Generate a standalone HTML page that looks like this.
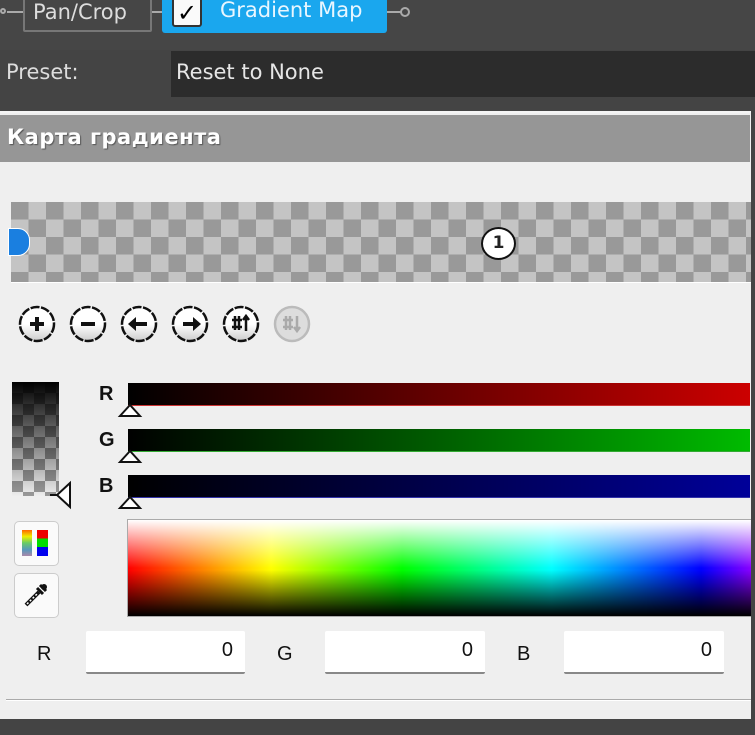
<!DOCTYPE html>
<html><head><meta charset="utf-8"><style>
*{margin:0;padding:0;box-sizing:border-box}
body{width:755px;height:735px;background:#444;position:relative;overflow:hidden;font-family:"DejaVu Sans","Liberation Sans",sans-serif}
.abs{position:absolute}
.lbl{font-size:20px;color:#111;font-family:"Liberation Sans",sans-serif}
.inp{position:absolute;background:#fff;height:43px;border-bottom:2px solid #888;border-radius:2px;font-size:20px;text-align:right;padding:8px 12px 0 0;color:#111;font-family:"Liberation Sans",sans-serif}
</style></head><body>
<div class="abs" style="left:0;top:0;width:755px;height:50px;background:#464646"></div>
<div class="abs" style="left:0;top:8px;width:6px;height:6px;border:2px solid #aaa;border-radius:50%;"></div>
<div class="abs" style="left:7px;top:11px;width:16px;height:2px;background:#aaa"></div>
<div class="abs" style="left:23px;top:-4px;width:129px;height:36px;border:2px solid #777;border-radius:2px;color:#ddd;font-size:21px;padding:2px 0 0 8px">Pan/Crop</div>
<div class="abs" style="left:152px;top:11px;width:10px;height:2px;background:#aaa"></div>
<div class="abs" style="left:162px;top:-4px;width:225px;height:37px;background:#1aa7ee;border-radius:3px;color:#e8f6ff;font-size:21px;padding:2px 0 0 58px">Gradient Map</div>
<div class="abs" style="left:172px;top:-3px;width:30px;height:30px;background:#fafafa;border:2px solid #333;border-radius:3px;font-size:24px;color:#000;text-align:center;line-height:28px">✓</div>
<div class="abs" style="left:387px;top:11px;width:14px;height:2px;background:#aaa"></div>
<div class="abs" style="left:400px;top:7px;width:10px;height:10px;border:2px solid #aaa;border-radius:50%"></div>
<div class="abs" style="left:6px;top:60px;font-size:21px;color:#ddd">Preset:</div>
<div class="abs" style="left:171px;top:51px;width:584px;height:46px;background:#2c2c2c;color:#e6e6e6;font-size:21px;padding:9px 0 0 5px">Reset to None</div>
<div class="abs" style="left:0;top:111px;width:751px;height:608px;background:#efefef;border-top:2px solid #f4f4f4"></div>
<div class="abs" style="left:0;top:115px;width:750px;height:47px;background:#969696;color:#fff;font-weight:bold;font-size:21px;letter-spacing:0.5px;padding:10px 0 0 7px;text-shadow:1px 1px 1px #555">Карта градиента</div>
<div class="abs" style="left:11px;top:202px;width:740px;height:81px;background:repeating-conic-gradient(#c4c4c4 0 25%,#999 0 50%) 0 0/35px 35px;border-bottom:1px solid #fff"></div>
<div class="abs" style="left:8px;top:228px;width:22px;height:28px;background:#1a7fe0;border-radius:0 12px 12px 0;border:1px solid #fff"></div>
<div class="abs" style="left:481px;top:227px;width:35px;height:33px;background:#fff;border:2px solid #111;border-radius:50%;text-align:center;font-size:17px;line-height:29px;color:#222;font-weight:bold">1</div>
<svg class="abs" style="left:0;top:300px" width="320" height="50">
<defs><linearGradient id="g" x1="0" y1="0" x2="0" y2="1"><stop offset="0.5" stop-color="#fff"/><stop offset="1" stop-color="#ccc"/></linearGradient></defs>
<g stroke="#111" stroke-width="2.5" fill="url(#g)" stroke-dasharray="9 1.5">
<circle cx="37" cy="24" r="17"/><circle cx="88" cy="24" r="17"/><circle cx="139" cy="24" r="17"/><circle cx="190" cy="24" r="17"/><circle cx="241" cy="24" r="17"/></g>
<circle cx="292" cy="24" r="17" stroke="#bbb" stroke-width="2.5" fill="#ddd"/>
<g stroke="#111" stroke-width="4" fill="none">
<path d="M30 24h14M37 17v14"/><path d="M81 24h14"/>
<path d="M132 24h15"/><path d="M183 24h15"/></g>
<path d="M128 24l8-7v14z" fill="#111"/><path d="M201 24l-8-7v14z" fill="#111"/>
<g stroke="#111" stroke-width="2.5" fill="none"><path d="M232 20h10M232 27h10M235 16v14M239 16v14M246 31v-14M243 20l3-4 3 4"/></g>
<g stroke="#aaa" stroke-width="2.5" fill="none"><path d="M283 20h10M283 27h10M286 16v14M290 16v14M297 16v14M294 27l3 4 3-4"/></g>
</svg>
<div class="abs" style="left:12px;top:382px;width:47px;height:114px;background:linear-gradient(#000,rgba(0,0,0,0)),repeating-conic-gradient(#999 0 25%,#eee 0 50%) 0 0/22px 22px"></div>
<svg class="abs" style="left:50px;top:480px" width="24" height="30"><path d="M20 3L7 15l13 12z" fill="#fff" stroke="#111" stroke-width="2"/><path d="M0 15h7" stroke="#111" stroke-width="2"/></svg>
<div class="abs lbl" style="left:99px;top:383px;font-weight:bold">R</div>
<div class="abs lbl" style="left:99px;top:429px;font-weight:bold">G</div>
<div class="abs lbl" style="left:99px;top:475px;font-weight:bold">B</div>
<div class="abs" style="left:128px;top:383px;width:622px;height:23px;background:linear-gradient(90deg,#000,#c00);border-bottom:1px solid #c33"></div>
<div class="abs" style="left:128px;top:429px;width:622px;height:23px;background:linear-gradient(90deg,#000,#0b0);border-bottom:1px solid #3a3"></div>
<div class="abs" style="left:128px;top:475px;width:622px;height:23px;background:linear-gradient(90deg,#000,#009);border-bottom:1px solid #33a"></div>
<svg class="abs" style="left:117px;top:403px" width="28" height="110">
<g fill="#fff" stroke="#111" stroke-width="2"><path d="M13 2L3 13h20z"/><path d="M13 48L3 59h20z"/><path d="M13 94L3 105h20z"/></g></svg>
<div class="abs" style="left:127px;top:519px;width:624px;height:98px;border:1px solid #aaa;border-right:none;background:linear-gradient(rgba(255,255,255,1),rgba(255,255,255,0) 50%,rgba(0,0,0,0) 52%,#000),linear-gradient(90deg,#f00 0%,#ff0 23%,#0f0 44%,#0ff 68%,#00f 92%,#80f 100%)"></div>
<div class="abs" style="left:14px;top:521px;width:45px;height:45px;background:#fafafa;border:1px solid #ccc;border-radius:5px"></div>
<div class="abs" style="left:22px;top:530px;width:10px;height:26px;background:linear-gradient(#f60,#ee0,#6c6,#59b,#a8a)"></div>
<div class="abs" style="left:37px;top:530px;width:11px;height:26px;background:linear-gradient(#e00 33%,#0d0 33% 66%,#00e 66%)"></div>
<div class="abs" style="left:14px;top:573px;width:45px;height:45px;background:#fafafa;border:1px solid #ccc;border-radius:5px"></div>
<svg class="abs" style="left:22px;top:580px" width="30" height="30"><path d="M4 25l13-13" stroke="#111" stroke-width="4"/><path d="M5 24l11-11" stroke="#fff" stroke-width="1.5" stroke-dasharray="2 2"/><path d="M15 8l6 6M18 5l6 6" stroke="#111" stroke-width="3"/><circle cx="22" cy="7" r="3" fill="#111"/></svg>
<div class="abs lbl" style="left:37px;top:643px">R</div>
<div class="inp" style="left:86px;top:631px;width:159px">0</div>
<div class="abs lbl" style="left:277px;top:643px">G</div>
<div class="inp" style="left:325px;top:631px;width:160px">0</div>
<div class="abs lbl" style="left:517px;top:643px">B</div>
<div class="inp" style="left:564px;top:631px;width:160px">0</div>
<div class="abs" style="left:6px;top:699px;width:745px;height:2px;background:#aaa;border-bottom:1px solid #fff"></div>
</body></html>
